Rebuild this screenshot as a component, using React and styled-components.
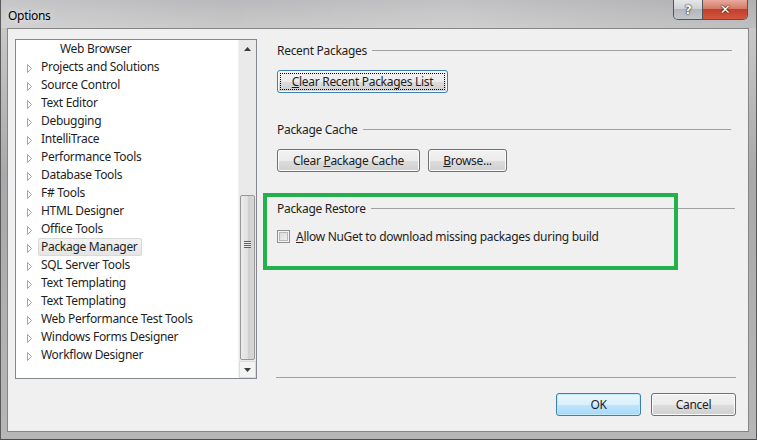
import styled, { createGlobalStyle } from "styled-components";

const GlobalStyle = createGlobalStyle`
  html, body {
    margin: 0;
    padding: 0;
    background: #ffffff;
  }
  body {
    font-family: "Noto Sans", "Open Sans", sans-serif;
    font-size: 12px;
    letter-spacing: -0.3px;
    color: #000;
  }
`;

const Frame = styled.div`
  width: 757px;
  height: 440px;
  box-sizing: border-box;
  display: flex;
  flex-direction: column;
  background: linear-gradient(180deg, #b9b9bb 0%, #c9c8c9 6%, #a9a8aa 40%, #b8b7b8 100%);
  border-left: 1px solid #5b5b5c;
  border-right: 1px solid #5b5b5c;
  border-bottom: 1px solid #4d4d4e;
  position: relative;
  overflow: hidden;
`;

const TitleBar = styled.div`
  height: 28px;
  display: flex;
  align-items: center;
  padding-left: 7px;
  background: linear-gradient(90deg, rgba(255,255,255,0.18), rgba(255,255,255,0) 30%, rgba(255,255,255,0.12) 60%, rgba(0,0,0,0.05));
`;

const Title = styled.span`
  font-size: 12px;
  color: #000;
  margin-top: 2px;
  text-shadow: 0 0 6px rgba(255, 255, 255, 0.9);
`;

const Caption = styled.div`
  position: absolute;
  top: 0;
  right: 8px;
  display: flex;
  border: 1px solid #52545a;
  border-top: none;
  border-radius: 0 0 5px 5px;
  overflow: hidden;
`;

const CaptionButton = styled.div`
  height: 19px;
  width: ${(p) => p.$w}px;
  display: flex;
  align-items: center;
  justify-content: center;
  color: #fff;
  font-family: "DejaVu Sans", sans-serif;
  font-weight: bold;
  font-size: ${(p) => (p.$close ? 13 : 12)}px;
  text-shadow: 0 0 2px #222, 0 0 1px #000;
  background: ${(p) =>
    p.$close
      ? "linear-gradient(180deg, #e9a99c 0%, #d37a68 45%, #c2402a 50%, #d4563d 100%)"
      : "linear-gradient(180deg, #e6e7e9 0%, #cfd1d4 45%, #b3b6ba 50%, #c3c6ca 100%)"};
  & + & {
    border-left: 1px solid #52545a;
  }
`;

const Client = styled.div`
  flex: 1;
  margin: 0 7px 7px 6px;
  background: #f0f0f0;
  border: 1px solid #858586;
  display: flex;
  padding: 10px 12px 0 7px;
`;

const Tree = styled.div`
  width: 242px;
  height: 340px;
  box-sizing: border-box;
  border: 1px solid #828790;
  background: #fff;
  display: flex;
  flex-shrink: 0;
`;

const TreeList = styled.div`
  flex: 1;
`;

const TreeRow = styled.div`
  height: 18px;
  display: flex;
  align-items: center;
  padding-left: ${(p) => (p.$child ? 44 : 10)}px;
`;

const Expander = styled.svg`
  width: 7px;
  height: 9px;
  margin-right: 8px;
  margin-top: 2px;
  flex-shrink: 0;
`;

const TreeLabel = styled.span`
  padding: 0 3px 0 2px;
  margin-left: -3px;
  line-height: 16px;
  border: 1px solid ${(p) => (p.$selected ? "#d9d9d9" : "transparent")};
  border-radius: 2px;
  background: ${(p) => (p.$selected ? "linear-gradient(180deg, #f2f2f2, #e5e5e5)" : "none")};
  color: #1e1e1e;
  white-space: nowrap;
`;

const ScrollBar = styled.div`
  width: 17px;
  display: flex;
  flex-direction: column;
  background: #eaeaea;
  border-left: 1px solid #f2f2f2;
`;

const ScrollArrow = styled.div`
  height: 17px;
  display: flex;
  align-items: center;
  justify-content: center;
  background: ${(p) => (p.$framed ? "#f3f3f3" : "transparent")};
  border: 1px solid ${(p) => (p.$framed ? "#dcdcdc" : "transparent")};
  box-sizing: border-box;
`;

const ScrollTrack = styled.div`
  flex: 1;
  display: flex;
  flex-direction: column;
  justify-content: flex-end;
  padding-bottom: 1px;
`;

const Thumb = styled.div`
  height: 163px;
  margin: 0 1px;
  border: 1px solid #979797;
  border-radius: 2px;
  background: linear-gradient(90deg, #ececec 0%, #e0e0e0 50%, #cfcfcf 51%, #d8d8d8 100%);
  display: flex;
  align-items: center;
  justify-content: center;
`;

const Grip = styled.div`
  width: 7px;
  height: 7px;
  margin-top: -66px;
  background: repeating-linear-gradient(180deg, #5c5c5c 0 1px, #ededed 1px 2px);
`;

const Pane = styled.div`
  flex: 1;
  margin-left: 19px;
  display: flex;
  flex-direction: column;
`;

const Section = styled.div`
  position: relative;
  padding-left: 1px;
  margin-top: ${(p) => p.$top}px;
`;

const Heading = styled.div`
  display: flex;
  align-items: center;
  height: 16px;
  color: #1e1e1e;
  margin-right: ${(p) => p.$right || 4}px;
  &::after {
    content: "";
    flex: 1;
    height: 1px;
    background: #a0a0a0;
    margin-left: 5px;
    margin-top: 1px;
  }
`;

const ButtonRow = styled.div`
  display: flex;
  gap: 8px;
  margin-top: 12px;
`;

const Button = styled.button`
  font: inherit;
  letter-spacing: inherit;
  color: #1e1e1e;
  height: 23px;
  width: ${(p) => (p.$w ? `${p.$w}px` : "auto")};
  padding: 0 10px;
  box-sizing: border-box;
  border-radius: 3px;
  border: 1px solid ${(p) => (p.$focus || p.$default ? "#3c7fb1" : "#707070")};
  background: ${(p) =>
    p.$default
      ? "linear-gradient(180deg, #eaf6fd 0%, #d9f0fc 50%, #bee6fd 51%, #a7d9f5 100%)"
      : "linear-gradient(180deg, #f2f2f2 0%, #ebebeb 50%, #dddddd 51%, #cfcfcf 100%)"};
  box-shadow: inset 0 0 0 1px ${(p) => (p.$default ? "#c3e9fd" : "#fcfcfc")};
  outline: ${(p) => (p.$focus ? "1px dotted #000" : "none")};
  outline-offset: -4px;
  display: flex;
  align-items: center;
  justify-content: center;
  cursor: default;
  white-space: nowrap;
`;

const Key = styled.span`
  text-decoration: underline;
`;

const Highlight = styled.div`
  position: absolute;
  left: -13px;
  top: -7px;
  width: 415px;
  height: 77px;
  box-sizing: border-box;
  border: 4px solid #22b14c;
  pointer-events: none;
`;

const CheckRow = styled.label`
  display: flex;
  align-items: center;
  margin-top: 12px;
  height: 16px;
  color: #1e1e1e;
`;

const CheckBox = styled.span`
  width: 13px;
  height: 13px;
  box-sizing: border-box;
  border: 1px solid #8e8f8f;
  background: linear-gradient(135deg, #d5d5d5, #f4f4f4);
  box-shadow: inset 0 0 0 1px #f4f4f4, inset 0 0 0 2px #b8b8b8;
  margin-right: 6px;
  margin-top: 1px;
`;

const Spacer = styled.div`
  flex: 1;
`;

const Separator = styled.div`
  height: 1px;
  background: #a0a0a0;
  margin-bottom: 15px;
`;

const Footer = styled.div`
  display: flex;
  justify-content: flex-end;
  gap: 10px;
  margin-bottom: 15px;
`;

const items = [
  "Projects and Solutions",
  "Source Control",
  "Text Editor",
  "Debugging",
  "IntelliTrace",
  "Performance Tools",
  "Database Tools",
  "F# Tools",
  "HTML Designer",
  "Office Tools",
  "Package Manager",
  "SQL Server Tools",
  "Text Templating",
  "Text Templating",
  "Web Performance Test Tools",
  "Windows Forms Designer",
  "Workflow Designer",
];

function Arrow() {
  return (
    <Expander viewBox="0 0 7 9">
      <path d="M1.5 0.5 L5.5 4.5 L1.5 8.5 Z" fill="#fff" stroke="#a6a6a6" strokeWidth="1" />
    </Expander>
  );
}

export default function App() {
  return (
    <>
      <GlobalStyle />
      <Frame>
        <TitleBar>
          <Title>Options</Title>
        </TitleBar>
        <Caption>
          <CaptionButton $w={28}>?</CaptionButton>
          <CaptionButton $w={44} $close>
            ✕
          </CaptionButton>
        </Caption>
        <Client>
          <Tree>
            <TreeList>
              <TreeRow $child>
                <TreeLabel>Web Browser</TreeLabel>
              </TreeRow>
              {items.map((name, i) => (
                <TreeRow key={i}>
                  <Arrow />
                  <TreeLabel $selected={name === "Package Manager"}>{name}</TreeLabel>
                </TreeRow>
              ))}
            </TreeList>
            <ScrollBar>
              <ScrollArrow>
                <svg width="7" height="4" viewBox="0 0 7 4">
                  <path d="M0 4 L3.5 0 L7 4 Z" fill="#3b3b3b" />
                </svg>
              </ScrollArrow>
              <ScrollTrack>
                <Thumb>
                  <Grip />
                </Thumb>
              </ScrollTrack>
              <ScrollArrow $framed>
                <svg width="7" height="4" viewBox="0 0 7 4">
                  <path d="M0 0 L7 0 L3.5 4 Z" fill="#3b3b3b" />
                </svg>
              </ScrollArrow>
            </ScrollBar>
          </Tree>
          <Pane>
            <Section $top={3}>
              <Heading>Recent Packages</Heading>
              <ButtonRow>
                <Button $focus $w={171}>
                  <span>
                    <Key>C</Key>lear Recent Packages List
                  </span>
                </Button>
              </ButtonRow>
            </Section>
            <Section $top={28}>
              <Heading $right={5}>Package Cache</Heading>
              <ButtonRow>
                <Button $w={143}>
                  <span>
                    Clear <Key>P</Key>ackage Cache
                  </span>
                </Button>
                <Button $w={79}>
                  <span>
                    <Key>B</Key>rowse...
                  </span>
                </Button>
              </ButtonRow>
            </Section>
            <Section $top={28}>
              <Highlight />
              <Heading $right={1}>Package Restore</Heading>
              <CheckRow>
                <CheckBox />
                <span>
                  <Key>A</Key>llow NuGet to download missing packages during build
                </span>
              </CheckRow>
            </Section>
            <Spacer />
            <Separator />
            <Footer>
              <Button $default $w={85}>
                OK
              </Button>
              <Button $w={85}>Cancel</Button>
            </Footer>
          </Pane>
        </Client>
      </Frame>
    </>
  );
}
